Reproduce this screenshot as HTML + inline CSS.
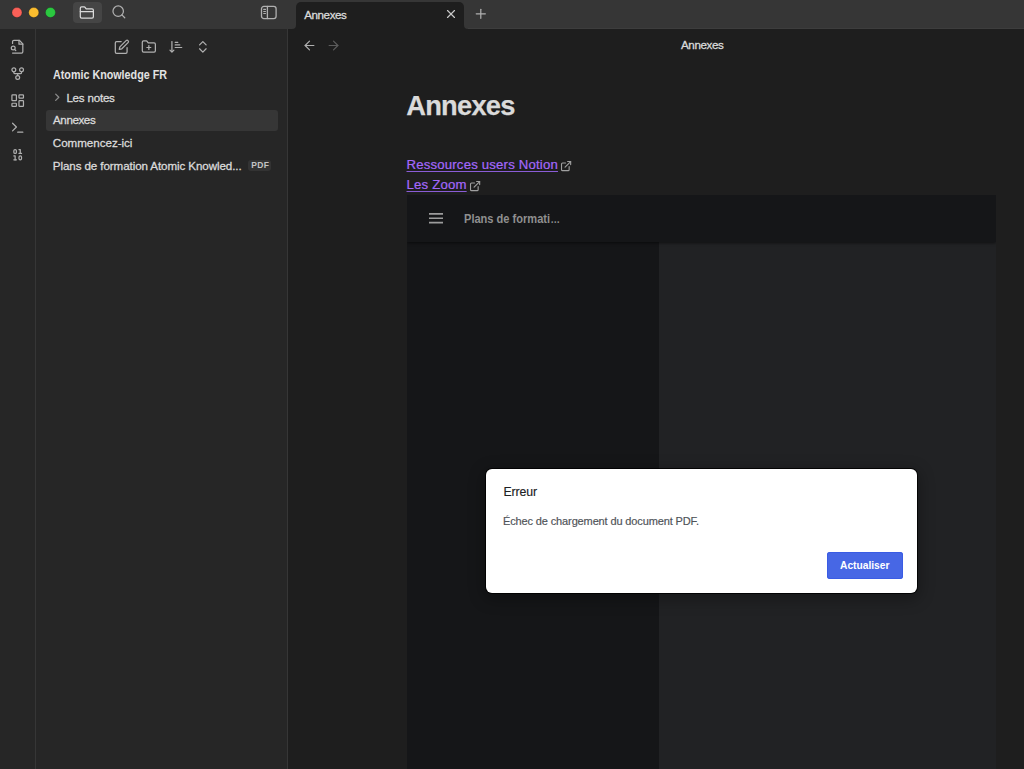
<!DOCTYPE html>
<html lang="fr">
<head>
<meta charset="utf-8">
<title>Annexes - Atomic Knowledge FR - Obsidian</title>
<style>
html,body{margin:0;padding:0;}
body{width:1024px;height:769px;overflow:hidden;background:#1e1e1e;position:relative;
 font-family:"Liberation Sans",sans-serif;-webkit-font-smoothing:antialiased;}
.abs,.t,.ic{position:absolute;}
.t{white-space:nowrap;line-height:1.117;}
.ic{fill:none;stroke:currentColor;stroke-linecap:round;stroke-linejoin:round;overflow:visible;}
#titlebar{left:0;top:0;width:1024px;height:29px;background:#363636;}
#ribbon{left:0;top:29px;width:35px;height:740px;background:#262626;border-right:1px solid #363636;}
#side{left:36px;top:29px;width:251px;height:740px;background:#262626;border-right:1px solid #363636;}
#tab{left:296px;top:2px;width:168px;height:27px;background:#1e1e1e;border-radius:5px 5px 0 0;}
.curve{width:4px;height:4px;top:25px;background:#1e1e1e;}
.curve i{position:absolute;left:0;top:0;width:4px;height:4px;background:#363636;}
#tabhl{left:73px;top:2px;width:29px;height:21px;border-radius:4px;background:#454545;}
#active{left:46px;top:110px;width:232px;height:21px;border-radius:3px;background:#363636;}
#pdftag{left:248px;top:160px;width:23px;height:11px;border-radius:3px;background:#333;}
#pdf{left:407px;top:195px;width:589px;height:574px;background:#212224;overflow:hidden;}
#pdfside{left:0;top:47px;width:252px;height:527px;background:#151618;}
#pdfbar{left:0;top:0;width:589px;height:47px;background:#151618;box-shadow:0 1px 3px rgba(0,0,0,.55);}
#dlg{left:486px;top:469px;width:431px;height:124px;border-radius:6px;background:#fff;
 box-shadow:0 0 0 1px rgba(0,0,0,.85),0 4px 16px 2px rgba(0,0,0,.32);}
#btn{left:827px;top:552px;width:75.500px;height:27px;border-radius:3px;background:#4767e5;box-shadow:inset 0 0 0 1px #3a5ce4;}
a.lnk{text-decoration:underline;text-underline-offset:1.5px;text-decoration-thickness:1px;text-decoration-color:#8a5cd6;cursor:pointer;}
h1.t{font-weight:700;}
</style>
</head>
<body>

<header>
<div id="titlebar" class="abs"></div>
<div class="abs" style="left:468px;top:28px;width:556px;height:1px;background:#3d3d3d"></div>
<svg class="abs" style="left:0;top:0;width:64px;height:28px" viewBox="0 0 64 28"><g stroke="rgba(0,0,0,.28)" stroke-width=".6"><circle cx="16.950" cy="12.500" r="5" fill="#fa6058"/><circle cx="33.750" cy="12.500" r="5" fill="#fbbd2f"/><circle cx="50.450" cy="12.500" r="5" fill="#2bc840"/></g></svg>
<div id="tabhl" class="abs"></div>
<svg class="ic" style="left:79.40px;top:4.50px;width:15.7px;height:15.7px;color:#dadada" viewBox="0 0 24 24" stroke-width="1.9" ><path d="M20 20a2 2 0 0 0 2-2V8a2 2 0 0 0-2-2h-7.900a2 2 0 0 1-1.690-.9L9.600 3.900A2 2 0 0 0 7.930 3H4a2 2 0 0 0-2 2v13a2 2 0 0 0 2 2Z"/><path d="M2 10h20"/></svg>
<svg class="ic" style="left:110.55px;top:4.45px;width:15.7px;height:15.7px;color:#b0b0b0" viewBox="0 0 24 24" stroke-width="1.9" ><circle cx="11" cy="11" r="8"/><path d="m21 21-4.300-4.300"/></svg>
<svg class="ic" style="left:260px;top:5px;width:18px;height:15px;color:#b0b0b0" viewBox="0 0 18 15" stroke-width="1.300"><rect x="1.500" y="1.450" width="14.600" height="12.150" rx="2.400"/><path d="M7.400 1.500v12"/><path d="M3.700 4.400h1.800M3.700 6.500h1.800M3.700 8.500h1.800" stroke-width="1.100"/></svg>
<div id="tab" class="abs"></div>
<div class="abs curve" style="left:292px;"><i style="border-radius:0 0 4px 0"></i></div>
<div class="abs curve" style="left:464px;"><i style="border-radius:0 0 0 4px"></i></div>
<span class="t" style="left:304.20px;top:9.00px;font-size:11.6px;color:#dadada;letter-spacing:-0.4px;-webkit-text-stroke:0.3px currentColor;">Annexes</span>
<svg class="ic" style="left:444.00px;top:7.25px;width:14px;height:14px;color:#c8c8c8" viewBox="0 0 24 24" stroke-width="2" ><path d="M18 6 6 18"/><path d="m6 6 12 12"/></svg>
<svg class="ic" style="left:472.70px;top:5.70px;width:15.6px;height:15.6px;color:#b0b0b0" viewBox="0 0 24 24" stroke-width="1.9" ><path d="M5 12h14"/><path d="M12 5v14"/></svg>
</header>
<aside>
<div id="ribbon" class="abs"></div>
<svg class="ic" style="left:10.00px;top:39.40px;width:15.4px;height:15.4px;color:#b0b0b0" viewBox="0 0 24 24" stroke-width="1.9" ><path d="M4 22h14a2 2 0 0 0 2-2V7.500L14.500 2H6a2 2 0 0 0-2 2v3"/><polyline points="14 2 14 8 20 8"/><path d="M5 17a3 3 0 1 0 0-6 3 3 0 0 0 0 6z"/><path d="m9 18-1.500-1.500"/></svg>
<svg class="ic" style="left:10.00px;top:66.20px;width:15.4px;height:15.4px;color:#b0b0b0" viewBox="0 0 24 24" stroke-width="1.9" ><circle cx="12" cy="18" r="3"/><circle cx="6" cy="6" r="3"/><circle cx="18" cy="6" r="3"/><path d="M18 9v1a2 2 0 0 1-2 2H8a2 2 0 0 1-2-2V9"/><path d="M12 12v3"/></svg>
<svg class="ic" style="left:10.00px;top:93.00px;width:15.4px;height:15.4px;color:#b0b0b0" viewBox="0 0 24 24" stroke-width="1.9" ><rect x="3" y="3" width="7" height="9" rx="1"/><rect x="14" y="3" width="7" height="5" rx="1"/><rect x="14" y="12" width="7" height="9" rx="1"/><rect x="3" y="16" width="7" height="5" rx="1"/></svg>
<svg class="ic" style="left:10.00px;top:119.70px;width:15.4px;height:15.4px;color:#b0b0b0" viewBox="0 0 24 24" stroke-width="1.9" ><polyline points="4 17 10 11 4 5"/><line x1="12" x2="20" y1="19" y2="19"/></svg>
<svg class="ic" style="left:10.00px;top:147.30px;width:15.4px;height:15.4px;color:#b0b0b0" viewBox="0 0 24 24" stroke-width="1.9" ><rect x="14" y="14" width="4" height="6" rx="2"/><rect x="6" y="4" width="4" height="6" rx="2"/><path d="M6 20h4"/><path d="M14 10h4"/><path d="M6 14h2v6"/><path d="M14 4h2v6"/></svg>
</aside>
<nav>
<div id="side" class="abs"></div>
<svg class="ic" style="left:113.95px;top:39.15px;width:15.7px;height:15.7px;color:#b0b0b0" viewBox="0 0 24 24" stroke-width="1.9" ><path d="M11 4H4a2 2 0 0 0-2 2v14a2 2 0 0 0 2 2h14a2 2 0 0 0 2-2v-7"/><path d="M18.500 2.500a2.121 2.121 0 0 1 3 3L12 15l-4 1 1-4 9.500-9.500z"/></svg>
<svg class="ic" style="left:140.95px;top:39.15px;width:15.7px;height:15.7px;color:#b0b0b0" viewBox="0 0 24 24" stroke-width="1.9" ><path d="M4 20h16a2 2 0 0 0 2-2V8a2 2 0 0 0-2-2h-7.930a2 2 0 0 1-1.660-.9l-.820-1.200A2 2 0 0 0 7.930 3H4a2 2 0 0 0-2 2v13c0 1.100.9 2 2 2Z"/><line x1="12" x2="12" y1="10" y2="16"/><line x1="9" x2="15" y1="13" y2="13"/></svg>
<svg class="ic" style="left:167.55px;top:39.15px;width:15.7px;height:15.7px;color:#b0b0b0" viewBox="0 0 24 24" stroke-width="1.9" ><path d="M11 5h4"/><path d="M11 9h7"/><path d="M11 13h10"/><path d="m3 17 3 3 3-3"/><path d="M6 18V4"/></svg>
<svg class="ic" style="left:194.55px;top:39.15px;width:15.7px;height:15.7px;color:#b0b0b0" viewBox="0 0 24 24" stroke-width="1.9" ><path d="m7 15 5 5 5-5"/><path d="m7 9 5-5 5 5"/></svg>
<div id="active" class="abs"></div>
<span class="t" style="left:52.60px;top:69.00px;font-size:12px;color:#e2e2e2;font-weight:700;transform:scaleX(0.895);transform-origin:0 0;">Atomic Knowledge FR</span>
<svg class="ic" style="left:51.00px;top:90.95px;width:12.5px;height:12.5px;color:#8a8a8a" viewBox="0 0 24 24" stroke-width="2.5" ><path d="m9 18 6-6-6-6"/></svg>
<span class="t" style="left:66.40px;top:92.00px;font-size:11.6px;color:#dadada;letter-spacing:-0.22px;-webkit-text-stroke:0.3px currentColor;">Les notes</span>
<span class="t" style="left:53.00px;top:114.00px;font-size:11.6px;color:#dadada;letter-spacing:-0.4px;-webkit-text-stroke:0.3px currentColor;">Annexes</span>
<span class="t" style="left:52.80px;top:137.00px;font-size:11.6px;color:#dadada;letter-spacing:-0.02px;-webkit-text-stroke:0.3px currentColor;">Commencez-ici</span>
<span class="t" style="left:52.80px;top:160.00px;font-size:11.6px;color:#dadada;letter-spacing:-0.09px;-webkit-text-stroke:0.3px currentColor;">Plans de formation Atomic Knowled...</span>
<div id="pdftag" class="abs"></div>
<span class="t" style="left:251.30px;top:161.00px;font-size:8.5px;color:#c4c4c4;font-weight:700;letter-spacing:0.3px;">PDF</span>
</nav>
<main>
<svg class="ic" style="left:302.40px;top:37.60px;width:15px;height:15px;color:#b0b0b0" viewBox="0 0 24 24" stroke-width="1.9" ><path d="m12 19-7-7 7-7"/><path d="M19 12H5"/></svg>
<svg class="ic" style="left:326.25px;top:37.60px;width:15px;height:15px;color:#5c5c5c" viewBox="0 0 24 24" stroke-width="1.9" ><path d="M5 12h14"/><path d="m12 5 7 7-7 7"/></svg>
<span class="t" style="left:681.00px;top:39.00px;font-size:11.6px;color:#dadada;letter-spacing:-0.38px;-webkit-text-stroke:0.3px currentColor;">Annexes</span>
<h1 class="t" style="left:406.20px;top:91.00px;font-size:27.3px;color:#dadada;font-weight:700;letter-spacing:-0.75px;margin:0;-webkit-text-stroke:0.25px currentColor;">Annexes</h1>
<a class="t lnk" style="left:406.50px;top:158.00px;font-size:13.2px;color:#a468fc;letter-spacing:0.18px;-webkit-text-stroke:0.22px currentColor;">Ressources users Notion</a>
<svg class="ic" style="left:559.50px;top:159.90px;width:12.2px;height:12.2px;color:#a0a0a0" viewBox="0 0 24 24" stroke-width="2.2" ><path d="M18 13v6a2 2 0 0 1-2 2H5a2 2 0 0 1-2-2V8a2 2 0 0 1 2-2h6"/><polyline points="15 3 21 3 21 9"/><line x1="10" x2="21" y1="14" y2="3"/></svg>
<a class="t lnk" style="left:406.50px;top:178.00px;font-size:13.2px;color:#a468fc;letter-spacing:0.19px;-webkit-text-stroke:0.22px currentColor;">Les Zoom</a>
<svg class="ic" style="left:468.90px;top:179.90px;width:12.2px;height:12.2px;color:#a0a0a0" viewBox="0 0 24 24" stroke-width="2.2" ><path d="M18 13v6a2 2 0 0 1-2 2H5a2 2 0 0 1-2-2V8a2 2 0 0 1 2-2h6"/><polyline points="15 3 21 3 21 9"/><line x1="10" x2="21" y1="14" y2="3"/></svg>
<div id="pdf" class="abs"><div id="pdfside" class="abs"></div><div id="pdfbar" class="abs"><svg class="abs" style="left:21px;top:16px;width:16px;height:14px" viewBox="0 0 16 14"><path d="M1 2.900h14M1 7.300h14M1 11.600h14" stroke="#9c9c9c" stroke-width="1.600" fill="none"/></svg></div></div>
<span class="t" style="left:464.30px;top:213.00px;font-size:12.3px;color:#8f8f8f;font-weight:700;transform:scaleX(0.9);transform-origin:0 0;">Plans de formati<span style="font-size:10.500px;margin-left:0.500px">…</span></span>
</main>
<section role="dialog" aria-label="Erreur">
<div id="dlg" class="abs"></div>
<span class="t" style="left:503.40px;top:486.00px;font-size:12.3px;color:#202124;letter-spacing:-0.08px;-webkit-text-stroke:0.15px currentColor;">Erreur</span>
<span class="t" style="left:503.00px;top:515.00px;font-size:11px;color:#4f5358;letter-spacing:-0.13px;-webkit-text-stroke:0.18px currentColor;">Échec de chargement du document PDF.</span>
<div id="btn" class="abs" role="button"></div>
<span class="t" style="left:840.20px;top:559.00px;font-size:11px;color:#fff;font-weight:700;transform:scaleX(0.93);transform-origin:0 0;">Actualiser</span>
</section>

</body>
</html>
